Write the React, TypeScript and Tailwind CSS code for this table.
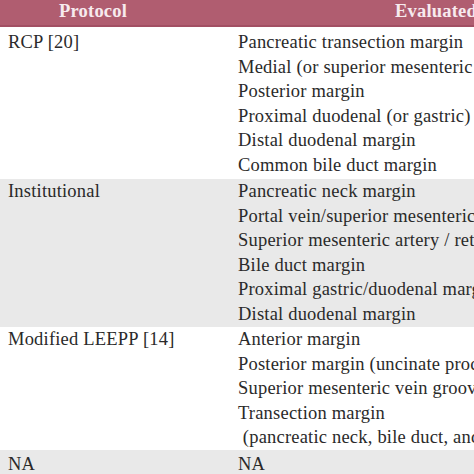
import React from "react";

const rows: { label: string; items: string[]; bg: string; h: string; pt: string }[] = [
  {
    label: "RCP [20]",
    items: [
      "Pancreatic transection margin",
      "Medial (or superior mesenteric artery) margin",
      "Posterior margin",
      "Proximal duodenal (or gastric) margin",
      "Distal duodenal margin",
      "Common bile duct margin",
    ],
    bg: "bg-white",
    h: "h-[152px]",
    pt: "pt-[3px]",
  },
  {
    label: "Institutional",
    items: [
      "Pancreatic neck margin",
      "Portal vein/superior mesenteric vein margin",
      "Superior mesenteric artery / retroperitoneal margin",
      "Bile duct margin",
      "Proximal gastric/duodenal margin",
      "Distal duodenal margin",
    ],
    bg: "bg-[#e9e9e9]",
    h: "h-[148px]",
    pt: "pt-0",
  },
  {
    label: "Modified LEEPP [14]",
    items: [
      "Anterior margin",
      "Posterior margin (uncinate process)",
      "Superior mesenteric vein groove",
      "Transection margin",
      "\u00a0(pancreatic neck, bile duct, and duodenum)",
    ],
    bg: "bg-white",
    h: "h-[123px]",
    pt: "pt-0",
  },
  {
    label: "NA",
    items: ["NA"],
    bg: "bg-[#e9e9e9]",
    h: "h-[40px]",
    pt: "pt-[2px]",
  },
];

export default function App() {
  return (
    <div
      className="w-[474px] h-[474px] overflow-hidden bg-white text-[#2a2a2a] text-[18.5px] leading-[24.5px] tracking-[0.2px]"
      style={{ fontFamily: '"Liberation Serif", "DejaVu Serif", serif' }}
    >
      <div className="flex h-[27px] bg-[#b05d70] border-b-2 border-[#a24f63] text-[#f7eaee] font-bold whitespace-nowrap">
        <div className="w-[231px] shrink-0 pl-[59px] leading-[22px]">Protocol</div>
        <div className="pl-[164px] leading-[22px]">Evaluated margins</div>
      </div>
      {rows.map((r) => (
        <div key={r.label} className={`flex ${r.bg} ${r.h} ${r.pt} whitespace-nowrap`}>
          <div className="w-[230px] shrink-0 pl-[8px]">{r.label}</div>
          <div className="pl-[8px] flex flex-col">
            {r.items.map((it, i) => (
              <div key={i}>{it}</div>
            ))}
          </div>
        </div>
      ))}
    </div>
  );
}
